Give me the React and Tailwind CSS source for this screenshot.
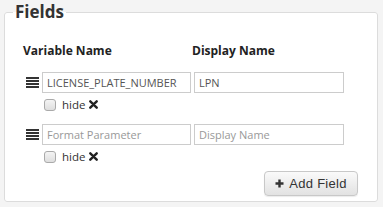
import React from "react";

const Bars = () => (
  <svg width="13" height="11" viewBox="0 0 13 11" className="block shrink-0">
    <rect x="0" y="0" width="13" height="2" fill="#333" />
    <rect x="0" y="3" width="13" height="2" fill="#333" />
    <rect x="0" y="6" width="13" height="2" fill="#333" />
    <rect x="0" y="9" width="13" height="2" fill="#333" />
  </svg>
);

const XMark = () => (
  <svg width="9" height="9" viewBox="0 0 9 9" className="block">
    <path d="M1.3 1.3 L7.7 7.7 M7.7 1.3 L1.3 7.7" stroke="#222" strokeWidth="2.4" strokeLinecap="round" />
  </svg>
);

const Plus = () => (
  <svg width="9" height="9" viewBox="0 0 9 9" className="block">
    <path d="M4.5 0.5 V8.5 M0.5 4.5 H8.5" stroke="#333" strokeWidth="2.4" />
  </svg>
);

const FieldRow = ({ value, placeholder1, placeholder2, value2 }) => (
  <div className="flex flex-col">
    <div className="flex items-center">
      <div className="ml-[3px]">
        <Bars />
      </div>
      <input
        readOnly
        value={value}
        placeholder={placeholder1}
        className="ml-[3px] w-[149px] h-[21px] border border-[#ccc] bg-white pl-[4px] text-[11px] text-[#555] placeholder:text-[#999] outline-none"
        style={{ fontFamily: '"Open Sans", sans-serif' }}
      />
      <input
        readOnly
        value={value2}
        placeholder={placeholder2}
        className="ml-[3px] w-[150px] h-[21px] border border-[#ccc] bg-white pl-[4px] text-[11px] text-[#555] placeholder:text-[#999] outline-none"
        style={{ fontFamily: '"Open Sans", sans-serif' }}
      />
    </div>
    <div className="flex items-center ml-[21px] mt-[5px] h-[13px]">
      <div className="w-[12px] h-[12px] rounded-[3px] border border-[#aaa] bg-gradient-to-b from-[#f4f4f4] to-[#dedede]" />
      <span className="ml-[6px] text-[11.5px] text-[#333] leading-[14px]">hide</span>
      <span className="ml-[4px]">
        <XMark />
      </span>
    </div>
  </div>
);

export default function App() {
  return (
    <div
      className="w-[383px] h-[207px] bg-[#f4f4f4] pl-[4px] pr-[5px] pb-[5px] overflow-hidden"
      style={{ fontFamily: '"Open Sans", sans-serif' }}
    >
      <fieldset className="w-[374px] h-[202px] border border-[#dcdcdc] rounded-[3px] bg-white">
        <legend className="ml-[8px] px-[2px] text-[17px] font-bold leading-[24px] text-[#333]">
          Fields
        </legend>
        <div className="pl-[18px] pt-[18px]">
          <div className="flex text-[12px] font-bold leading-[17px] text-[#222]">
            <div className="w-[169px]">Variable Name</div>
            <div>Display Name</div>
          </div>
          <div className="mt-[13px] flex flex-col gap-[13px]">
            <FieldRow value="LICENSE_PLATE_NUMBER" value2="LPN" />
            <FieldRow value="" value2="" placeholder1="Format Parameter" placeholder2="Display Name" />
          </div>
          <div className="flex justify-end pr-[19px] mt-[8px]">
            <button
              className="flex items-center justify-center w-[94px] h-[25px] rounded-[4px] border border-[#c8c8c8] bg-gradient-to-b from-[#fafafa] to-[#e2e2e2] shadow-[0_1px_1px_rgba(0,0,0,0.08)] text-[13px] text-[#333]"
              style={{ fontFamily: '"Liberation Sans", Arial, sans-serif' }}
            >
              <Plus />
              <span className="ml-[5px] tracking-[0.3px]">Add Field</span>
            </button>
          </div>
        </div>
      </fieldset>
    </div>
  );
}
